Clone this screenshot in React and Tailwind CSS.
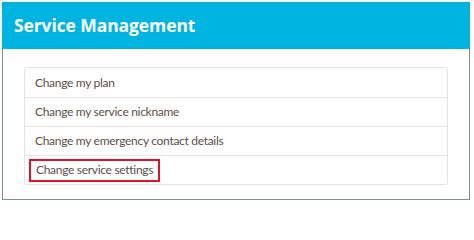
export default function App() {
  const items = [
    "Change my plan",
    "Change my service nickname",
    "Change my emergency contact details",
  ];

  return (
    <div className="w-[474px] h-[206px] bg-white pt-[2px] pl-[2px]">
      <div className="w-[468px] border border-t-0 border-[#7b8f8b]">
        <div className="h-[47px] -mx-px bg-[#00b4e1] flex items-center px-[12px]">
          <h2
            className="text-white font-bold text-[17.5px] leading-none tracking-[-0.1px]"
            style={{ fontFamily: '"Open Sans", sans-serif' }}
          >
            Service Management
          </h2>
        </div>
        <div
          className="px-[21px] pt-[18px] pb-[14px]"
          style={{ fontFamily: '"Lato", "Open Sans", sans-serif' }}
        >
          <ul className="border border-[#e6e4e2] rounded-[3px] text-[12px] tracking-[-0.3px] text-[#5b5049]">
            {items.map((t, i) => (
              <li
                key={t}
                className={`h-[29px] flex items-center px-[10px] ${i > 0 ? "border-t border-[#e6e4e2]" : ""}`}
              >
                {t}
              </li>
            ))}
            <li className="h-[29px] flex items-center px-[4px] border-t border-[#e6e4e2]">
              <span className="border-2 border-[#e0102f] px-[5px] h-[23px] flex items-center">
                Change service settings
              </span>
            </li>
          </ul>
        </div>
      </div>
    </div>
  );
}
